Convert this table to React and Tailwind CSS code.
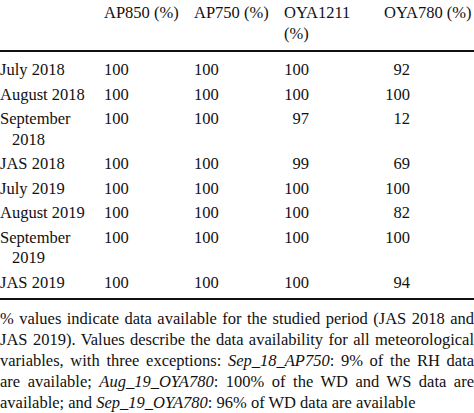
// Data availability table — station completeness per month with footnote.

const rows = [
  { label: "July 2018", v: ["100", "100", "100", "92"] },
  { label: "August 2018", v: ["100", "100", "100", "100"] },
  { label: "September 2018", v: ["100", "100", "97", "12"] },
  { label: "JAS 2018", v: ["100", "100", "99", "69"] },
  { label: "July 2019", v: ["100", "100", "100", "100"] },
  { label: "August 2019", v: ["100", "100", "100", "82"] },
  { label: "September 2019", v: ["100", "100", "100", "100"] },
  { label: "JAS 2019", v: ["100", "100", "100", "94"] },
];

const cols = "grid grid-cols-[104px_90px_90px_100px_1fr]";

function Row({ row }) {
  return (
    <div className={`${cols} py-[2px]`}>
      <div className="pl-[12px] -indent-[12px] pr-1">{row.label}</div>
      <div>{row.v[0]}</div>
      <div>{row.v[1]}</div>
      <div><div className="w-[25px] text-right">{row.v[2]}</div></div>
      <div><div className="w-[26px] text-right">{row.v[3]}</div></div>
    </div>
  );
}

const J = ({ children }) => (
  <div className="text-justify [text-align-last:justify]">{children}</div>
);

export default function App() {
  return (
    <div className="w-[474px] h-[413px] bg-white text-[#111] text-[16.5px] leading-[20.5px] font-['Liberation_Serif',serif] overflow-hidden">
      <div className={`${cols} pt-[3px] h-[50px]`}>
        <div />
        <div>AP850 (%)</div>
        <div>AP750 (%)</div>
        <div>OYA1211<br />(%)</div>
        <div>OYA780 (%)</div>
      </div>
      <div className="h-[2px] bg-[#111]" />
      <div className="pt-[6px] pb-[3px]">
        {rows.map(r => <Row key={r.label} row={r} />)}
      </div>
      <div className="h-[1.5px] bg-[#111]" />
      <div className="pt-[8px] leading-[21px]">
        <J>% values indicate data available for the studied period (JAS 2018 and</J>
        <J>JAS 2019). Values describe the data availability for all meteorological</J>
        <J>variables, with three exceptions: <i>Sep_18_AP750</i>: 9% of the RH data</J>
        <J>are available; <i>Aug_19_OYA780</i>: 100% of the WD and WS data are</J>
        <div>available; and <i>Sep_19_OYA780</i>: 96% of WD data are available</div>
      </div>
    </div>
  );
}
